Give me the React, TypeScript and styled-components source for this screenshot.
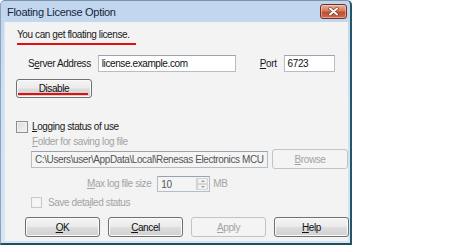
import React from "react";
import styled, { createGlobalStyle } from "styled-components";

const Global = createGlobalStyle`
  html, body { margin: 0; padding: 0; background: #ffffff; }
  body { font-family: "Liberation Sans", Arial, sans-serif; }
`;

const Page = styled.div`
  width: 452px;
  height: 245px;
  background: #ffffff;
  overflow: hidden;
`;

const Window = styled.div`
  width: 352px;
  height: 245px;
  box-sizing: border-box;
  display: flex;
  flex-direction: column;
  background: linear-gradient(180deg, #c0d5ee 0%, #cfe0f3 40%, #d6e5f5 100%);
  border-left: 1px solid #8aa3bf;
  border-right: 2px solid #23566b;
  border-bottom: 2px solid #1f4f60;
  border-top: 1px solid #7f93a8;
  border-top-left-radius: 5px;
  border-top-right-radius: 5px;
  font-family: "Liberation Sans", Arial, sans-serif;
  font-size: 10px;
  letter-spacing: -0.4px;
  color: #111;
`;

const TitleBar = styled.div`
  height: 21px;
  display: flex;
  align-items: center;
  justify-content: space-between;
  padding: 0 3px 0 6px;
  flex: none;
`;

const Title = styled.span`
  font-size: 11px;
  color: #15263a;
  letter-spacing: -0.3px;
`;

const CloseButton = styled.div`
  width: 25px;
  height: 13px;
  border: 1px solid #6e3423;
  border-radius: 3px;
  background: linear-gradient(180deg, #e8b3a0 0%, #d47a5e 45%, #bf4f31 55%, #cf6a4c 100%);
  display: flex;
  align-items: center;
  justify-content: center;
  box-shadow: inset 0 0 0 1px rgba(255, 220, 200, 0.5);
`;

const Body = styled.div`
  flex: 1;
  margin: 0 2px 2px 3px;
  background: #f3f3f3;
  padding: 7px 0 0 11px;
  display: flex;
  flex-direction: column;
  align-items: flex-start;
  border-left: 1px solid #dde6ef;
`;

const Notice = styled.div`
  margin-left: 1px;
  line-height: 12px;
  padding: 0 6px 2px 0;
  border-bottom: 2px solid #e01010;
  color: #1a1a1a;
`;

const Row = styled.div<{ $top: number; $indent?: number; $h?: number }>`
  display: flex;
  align-items: center;
  margin-top: ${(p) => p.$top}px;
  margin-left: ${(p) => p.$indent ?? 0}px;
  height: ${(p) => p.$h ?? 17}px;
`;

const Label = styled.span<{ $ml?: number; $disabled?: boolean }>`
  margin-left: ${(p) => p.$ml ?? 0}px;
  color: ${(p) => (p.$disabled ? "#a3a3a3" : "#1a1a1a")};
  line-height: 12px;
  white-space: nowrap;
`;

const Key = styled.span`
  text-decoration: underline;
`;

const TextBox = styled.div<{ $w: number; $ml?: number; $h?: number; $disabled?: boolean }>`
  width: ${(p) => p.$w}px;
  height: ${(p) => p.$h ?? 17}px;
  margin-left: ${(p) => p.$ml ?? 0}px;
  box-sizing: border-box;
  border: 1px solid #b5bdc7;
  border-top-color: #9aa3ad;
  background: ${(p) => (p.$disabled ? "#f4f4f4" : "#ffffff")};
  color: ${(p) => (p.$disabled ? "#555" : "#111")};
  display: flex;
  align-items: center;
  padding-left: 3px;
  overflow: hidden;
  white-space: nowrap;
  position: relative;
  flex: none;
`;

const Button = styled.div<{ $w: number; $h?: number; $ml?: number; $disabled?: boolean }>`
  position: relative;
  width: ${(p) => p.$w}px;
  height: ${(p) => p.$h ?? 20}px;
  margin-left: ${(p) => p.$ml ?? 0}px;
  box-sizing: border-box;
  border: 1px solid ${(p) => (p.$disabled ? "#c3c3c3" : "#707070")};
  border-radius: 3px;
  background: ${(p) =>
    p.$disabled
      ? "#f4f4f4"
      : "linear-gradient(180deg, #f4f4f4 0%, #ebebeb 48%, #dddddd 52%, #d0d0d0 100%)"};
  box-shadow: ${(p) => (p.$disabled ? "none" : "inset 0 0 0 1px #fbfbfb")};
  color: ${(p) => (p.$disabled ? "#a3a3a3" : "#111")};
  display: flex;
  align-items: center;
  justify-content: center;
  flex: none;
`;

const RedMark = styled.div`
  position: absolute;
  left: 1px;
  right: 3px;
  bottom: 2px;
  height: 2px;
  background: #e01010;
`;

const Check = styled.div<{ $size: number; $disabled?: boolean }>`
  width: ${(p) => p.$size}px;
  height: ${(p) => p.$size}px;
  box-sizing: border-box;
  border: 1px solid ${(p) => (p.$disabled ? "#c9c9c9" : "#8e8f8f")};
  background: ${(p) =>
    p.$disabled ? "#f6f6f6" : "linear-gradient(135deg, #dcdcdc 0%, #f4f4f4 100%)"};
  box-shadow: inset 0 0 0 1px ${(p) => (p.$disabled ? "#f2f2f2" : "#f0f0f0")};
  flex: none;
`;

const Spinner = styled.div`
  position: absolute;
  right: 1px;
  top: 1px;
  bottom: 1px;
  width: 11px;
  display: flex;
  flex-direction: column;
  border-left: 1px solid #d0d0d0;
`;

const SpinHalf = styled.div`
  flex: 1;
  display: flex;
  align-items: center;
  justify-content: center;
  background: #f0f0f0;
  border: 1px solid #d6d6d6;
`;

const Arrow = styled.div<{ $up?: boolean }>`
  width: 0;
  height: 0;
  border-left: 2px solid transparent;
  border-right: 2px solid transparent;
  ${(p) => (p.$up ? "border-bottom: 2px solid #a0a0a0;" : "border-top: 2px solid #a0a0a0;")}
`;

const ButtonRow = styled.div`
  display: flex;
  gap: 8px;
  margin-top: 9px;
  margin-left: 9px;
`;

export default function App() {
  return (
    <>
      <Global />
      <Page>
        <Window>
          <TitleBar>
            <Title>Floating License Option</Title>
            <CloseButton>
              <svg width="11" height="9" viewBox="0 0 11 9">
                <path d="M2 1.5 L9 7.5 M9 1.5 L2 7.5" stroke="#7a3322" strokeWidth="3.2" strokeLinecap="round" />
                <path d="M2 1.5 L9 7.5 M9 1.5 L2 7.5" stroke="#ffffff" strokeWidth="2" strokeLinecap="round" />
              </svg>
            </CloseButton>
          </TitleBar>
          <Body>
            <Notice>You can get floating license.</Notice>
            <Row $top={10}>
              <Label $ml={12}>
                S<Key>e</Key>rver Address
              </Label>
              <TextBox $w={138} $ml={7}>license.example.com</TextBox>
              <Label $ml={24}>
                <Key>P</Key>ort
              </Label>
              <TextBox $w={51} $ml={7}>6723</TextBox>
            </Row>
            <Row $top={7} $h={19}>
              <Button $w={76} $h={19}>
                Disable
                <RedMark />
              </Button>
            </Row>
            <Row $top={23} $h={12}>
              <Check $size={12} />
              <Label $ml={4}>
                <Key>L</Key>ogging status of use
              </Label>
            </Row>
            <Row $top={3} $h={12} $indent={16}>
              <Label $disabled>
                <Key>F</Key>older for saving log file
              </Label>
            </Row>
            <Row $top={1} $h={20} $indent={15}>
              <TextBox $w={237} $disabled>
                C:\Users\user\AppData\Local\Renesas Electronics MCU
              </TextBox>
              <Button $w={76} $ml={4} $disabled>
                <span>
                  <Key>B</Key>rowse
                </span>
              </Button>
            </Row>
            <Row $top={7} $h={16} $indent={71}>
              <Label $disabled>
                <Key>M</Key>ax log file size
              </Label>
              <TextBox $w={53} $h={16} $ml={6} $disabled>
                10
                <Spinner>
                  <SpinHalf>
                    <Arrow $up />
                  </SpinHalf>
                  <SpinHalf>
                    <Arrow />
                  </SpinHalf>
                </Spinner>
              </TextBox>
              <Label $ml={3} $disabled>
                MB
              </Label>
            </Row>
            <Row $top={5} $h={11} $indent={15}>
              <Check $size={11} $disabled />
              <Label $ml={6} $disabled>
                Save deta<Key>i</Key>led status
              </Label>
            </Row>
            <ButtonRow>
              <Button $w={75}>
                <span>
                  <Key>O</Key>K
                </span>
              </Button>
              <Button $w={75}>
                <span>
                  <Key>C</Key>ancel
                </span>
              </Button>
              <Button $w={75} $disabled>
                <span>
                  <Key>A</Key>pply
                </span>
              </Button>
              <Button $w={75}>
                <span>
                  <Key>H</Key>elp
                </span>
              </Button>
            </ButtonRow>
          </Body>
        </Window>
      </Page>
    </>
  );
}
